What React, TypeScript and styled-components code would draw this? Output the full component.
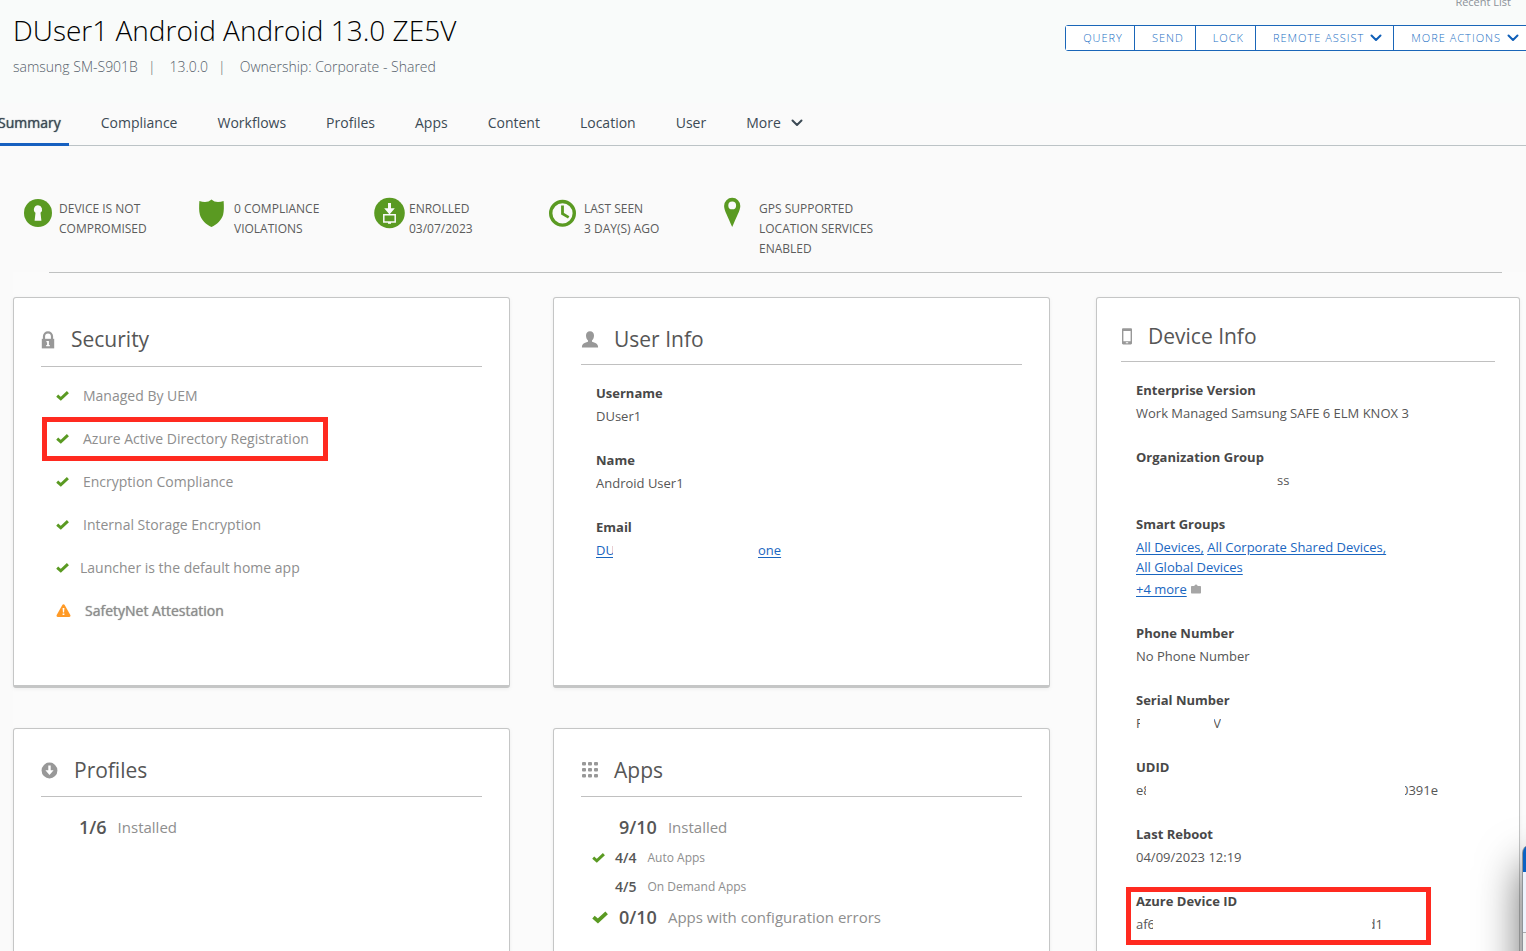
import React from "react";
import styled, { createGlobalStyle, css } from "styled-components";

const GlobalStyle = createGlobalStyle`
  *, *::before, *::after { box-sizing: border-box; }
  body {
    margin: 0;
    background: #fafafa;
    color: #565656;
    font-family: "Open Sans", "Noto Sans", sans-serif;
    font-size: 13px;
    line-height: 20px;
  }
  h1, h2, p, ul, dl, dd { margin: 0; padding: 0; }
  ul { list-style: none; }
`;

const Page = styled.div`
  position: relative;
  height: 100vh;
  overflow: hidden;
`;

/* Regular letterforms with a darker, slightly heavier stroke. */
const heavier = css`
  text-shadow: 0 0 1px currentColor;
`;

/* ---------- header ---------- */

const Header = styled.header`
  display: flex;
  justify-content: space-between;
  height: 103px;
  padding-left: 13px;
  background: #f9fbfa;
`;

const Heading = styled.div`
  padding-top: 11px;
`;

const Title = styled.h1`
  font-size: 28px;
  line-height: 38px;
  font-weight: 300;
  color: #000;
`;

const Subtitle = styled.ul`
  display: flex;
  margin-top: 8px;
  font-size: 14px;
  font-weight: 300;
  color: #565f6b;

  li + li::before {
    content: "|";
    margin: 0 14px 0 10px;
  }
`;

const HeaderActions = styled.div`
  display: flex;
  flex-direction: column;
  align-items: flex-end;
`;

const RecentLink = styled.a`
  height: 25px;
  margin-right: 15px;
  font-size: 11px;
  line-height: 4px;
  color: #8c9299;
  text-decoration: none;
`;

const ButtonGroup = styled.div`
  display: flex;
  height: 26px;
  margin-right: -5px;
  border: 1px solid #1a66b8;
  border-radius: 3px;
`;

const ActionButton = styled.button`
  display: flex;
  align-items: center;
  gap: 6px;
  padding: 0 11px 0 17px;
  border: 0;
  background: #fff;
  color: #2370c4;
  font: 300 11px/24px "Open Sans", sans-serif;
  letter-spacing: 1px;
  cursor: pointer;

  & + & { border-left: 1px solid #1a66b8; }
`;

/* ---------- tabs ---------- */

const Tabs = styled.nav`
  display: flex;
  gap: 24px;
  height: 43px;
  margin-left: -10px;
  border-bottom: 1px solid #bcc3c6;
`;

const Tab = styled.a<{ $active?: boolean }>`
  display: flex;
  align-items: center;
  gap: 10px;
  height: 43px;
  padding: 0 8px 3px;
  font-size: 14px;
  color: #3c4a55;
  text-decoration: none;
  ${(p) =>
    p.$active &&
    css`
      padding-bottom: 0;
      border-bottom: 3px solid #1660c0;
      ${heavier}
    `}
`;

/* ---------- status strip ---------- */

const StatusStrip = styled.ul`
  display: flex;
  height: 126px;
  padding: 53px 0 0 24px;
`;

const StatusItem = styled.li`
  display: grid;
  grid-template-columns: 35px 140px;
  font-size: 12px;
  line-height: 20px;
  color: #5c5c5c;

  svg { display: block; overflow: visible; }
`;

const Body = styled.main`
  margin-left: 13px;
  padding-right: 6px;
  background: #fbfbfb;
`;

const Divider = styled.hr`
  height: 1px;
  margin: 0 18px 24px 36px;
  border: 0;
  background: #bfc1c1;
`;

const Columns = styled.div`
  display: flex;
  align-items: flex-start;
  gap: 46px;
`;

const CardGrid = styled.div`
  flex: 1037;
  display: grid;
  grid-template-columns: 1fr 1fr;
  gap: 40px 43px;
`;

const Side = styled.aside`
  flex: 424;
`;

const Card = styled.section`
  min-height: 391px;
  padding: 22px 27px;
  border: 1px solid #c5c6c6;
  border-bottom-width: 3px;
  border-radius: 3px;
  background: #fff;
  box-shadow: 0 1px 4px rgba(0, 0, 0, 0.06);
`;

const SideCard = styled(Card)`
  min-height: 822px;
  padding: 19px 24px;
`;

const CardTitle = styled.h2<{ $gap: number; $below?: number }>`
  display: flex;
  align-items: center;
  gap: ${(p) => p.$gap}px;
  padding: 4px 0 ${(p) => p.$below ?? 11}px;
  border-bottom: 1px solid #c0c0c0;
  font-size: 21px;
  line-height: 30px;
  font-weight: 400;
  color: #565656;

  svg { flex: none; }
`;

const CheckList = styled.ul`
  padding: 7px 0 0 15px;
`;

const CheckRow = styled.li<{ $gap: number; $strong?: boolean }>`
  position: relative;
  display: flex;
  align-items: center;
  gap: ${(p) => p.$gap}px;
  height: 43px;
  font-size: 14px;
  color: #8e8e8e;
  ${(p) => p.$strong && heavier}
`;

const Highlight = styled.span<{ $inset: string; $width?: number }>`
  position: absolute;
  inset: ${(p) => p.$inset};
  width: ${(p) => (p.$width ? `${p.$width}px` : "auto")};
  border: 5px solid #ff2a20;
  pointer-events: none;
`;

const Fields = styled.dl`
  padding: 18px 0 0 15px;
`;

const Field = styled.div`
  position: relative;
  margin-bottom: 24px;

  dt {
    height: 23px;
    font-weight: 700;
    color: #484848;
  }
  dd { min-height: 20px; }
`;

const Link = styled.a`
  color: #1a66c0;
  text-decoration: underline;
  text-underline-offset: 2px;
`;

const MoreLine = styled.span`
  display: flex;
  align-items: center;
  gap: 4px;
  height: 22px;
  padding-top: 2px;
`;

/* A value whose middle is hidden: only its two ends can be seen. */
const Redacted = styled.dd`
  display: flex;
`;

const Fragment = styled.span<{ $width: number; $end?: boolean }>`
  display: flex;
  justify-content: ${(p) => (p.$end ? "flex-end" : "flex-start")};
  width: ${(p) => p.$width}px;
  overflow: hidden;
  white-space: nowrap;
`;

const Blank = styled.span<{ $width: number }>`
  width: ${(p) => p.$width}px;
`;

const Stats = styled.ul`
  padding-top: 14px;
`;

const Stat = styled.li<{ $small?: boolean; $indent: number }>`
  display: grid;
  grid-template-columns: ${(p) => p.$indent}px auto 1fr;
  align-items: center;
  height: ${(p) => (p.$small ? 29 : 32)}px;
  font-size: ${(p) => (p.$small ? 12 : 15)}px;
  color: #8e8e8e;

  strong {
    margin-right: 11px;
    font-size: ${(p) => (p.$small ? 14 : 18)}px;
    font-weight: 600;
    color: #565656;
  }
`;

const StatIcon = styled.span`
  display: flex;
  padding-left: 11px;
`;

/* ---------- neighbouring window ---------- */

const OtherWindow = styled.div`
  position: absolute;
  left: calc(100% - 4px);
  top: 845px;
  width: 400px;
  height: 300px;
  border-left: 1px solid #8f9499;
  border-radius: 8px 0 0 0;
  background: linear-gradient(#0b62c4 0 27px, #eef3fd 27px 87px, #a9abad 87px 88px, #f1f1f1 88px);
  box-shadow: 0 20px 44px rgba(0, 0, 0, 0.6);
`;

/* ---------- icons ---------- */

const GREEN = "#5a9a22";
const GREY = "#989898";

const Chevron = ({ color }: { color: string }) => (
  <svg width="12" height="8" viewBox="0 0 12 8" fill="none" aria-hidden="true">
    <path d="M1.500 1.500 6 6l4.500-4.500" stroke={color} strokeWidth="2" strokeLinecap="round" strokeLinejoin="round" />
  </svg>
);

const Check = ({ size = 13 }: { size?: number }) => (
  <svg width={size} height={size - 3} viewBox="0 0 13 10" fill="none" aria-hidden="true">
    <path d="M1.200 4.700 4.800 7.800 11.900 1.200" stroke={GREEN} strokeWidth="3" />
  </svg>
);

const KeyholeIcon = () => (
  <svg width="28" height="28" viewBox="0 0 28 28" aria-hidden="true">
    <circle cx="14" cy="14" r="14" fill={GREEN} />
    <path d="M14 6.300a4.200 4.200 0 0 0-2.500 7.500L10.600 21.700h6.800L16.500 13.800A4.200 4.200 0 0 0 14 6.300z" fill="#fafafa" />
  </svg>
);

const ShieldIcon = () => (
  <svg width="26" height="28" viewBox="0 0 26 28" aria-hidden="true">
    <path d="M12.500.6c1.800 1.700 4 2.500 6.500 2.500 2 0 3.900-.3 5.600-1 .4 5.300.5 10-.5 13.600C22.500 21 18 25.500 12.500 28 7 25.500 2.500 21 .9 15.700-.1 12.100 0 7.400.4 2.100 2.100 2.800 4 3.100 6 3.100c2.500 0 4.700-.8 6.500-2.500z" fill={GREEN} />
  </svg>
);

const EnrolledIcon = () => (
  <svg width="31" height="31" viewBox="0 0 31 31" aria-hidden="true">
    <circle cx="15.500" cy="14" r="15.300" fill={GREEN} />
    <path d="M9.800 15.700h11.400v7.200H9.800z" fill="none" stroke="#fafafa" strokeWidth="1.500" />
    <path d="M14 4h3v5.300h3.800L15.500 15.500l-5.300-6.200H14z" fill="#fafafa" />
    <path d="M14 23h3v1.800h-3z" fill="#fafafa" />
  </svg>
);

const ClockIcon = () => (
  <svg width="27" height="28" viewBox="0 0 27 28" fill="none" stroke={GREEN} aria-hidden="true">
    <circle cx="13.500" cy="14.300" r="11.800" strokeWidth="3.400" />
    <path d="M13.500 6.500v8.300l6.200 3.600" strokeWidth="2.800" />
  </svg>
);

const PinIcon = () => (
  <svg width="17" height="30" viewBox="0 0 17 30" aria-hidden="true">
    <path d="M8.200-1.200A8 8 0 0 0 .1 6.900C.1 11.300 4 17.800 8.200 28 12.400 17.800 16.300 11.300 16.300 6.900A8 8 0 0 0 8.200-1.200zm0 3.700a3.900 3.900 0 1 1 0 7.800 3.900 3.900 0 0 1 0-7.800z" fill={GREEN} />
  </svg>
);

const WarningIcon = () => (
  <svg width="15" height="13" viewBox="0 0 15 13" aria-hidden="true">
    <path d="M7.500.2c.5 0 .9.300 1.200.8l5.600 10c.5 1 0 1.900-1.100 1.900H1.800C.7 12.900.2 12 .7 11L6.300 1C6.600.5 7 .2 7.500.2z" fill="#ff9a26" />
    <path d="M6.600 4h1.800l-.3 4.500H6.900zM6.600 9.500h1.800v1.600H6.600z" fill="#fff" />
  </svg>
);

const LockIcon = () => (
  <svg width="14" height="20" viewBox="0 -2 14 20" aria-hidden="true">
    <path d="M3 9V5.300a4 4 0 0 1 8 0V9" fill="none" stroke={GREY} strokeWidth="2.200" />
    <path d="M.8 7.800h12.400v9.600H.8z" fill={GREY} />
    <path d="M5.400 10.100h2.500v4h.9v1.200H5.200v-1.200h.9v-2.800h-.7z" fill="#fff" />
  </svg>
);

const UserIcon = () => (
  <svg width="18" height="17" viewBox="0 0 18 17" aria-hidden="true">
    <path d="M9 .3c2.500 0 4 1.700 4 4.200 0 2-.8 4-2 5v1.300c2.600.9 5.600 1.700 6 4.500l.1 1.200H.9L1 15.300c.4-2.800 3.400-3.600 6-4.500V9.500c-1.200-1-2-3-2-5C5 2 6.500.3 9 .3z" fill={GREY} />
  </svg>
);

const PhoneIcon = () => (
  <svg width="12" height="17" viewBox="0 0 12 17" aria-hidden="true">
    <path fillRule="evenodd" d="M2.200.3h7.600c.7 0 1.200.5 1.200 1.200v13.800c0 .7-.5 1.200-1.200 1.200H2.200c-.7 0-1.200-.5-1.200-1.200V1.500C1 .8 1.500.3 2.200.3zM2.400 3v10.300h7.200V3zM4.800 14.300v1h2.400v-1z" fill={GREY} />
  </svg>
);

const ProfileIcon = () => (
  <svg width="17" height="17" viewBox="0 0 17 17" aria-hidden="true">
    <circle cx="8.500" cy="8.500" r="7.900" fill={GREY} />
    <path d="M7.300 3.500h2.400v4.700h2.900L8.500 13 4.400 8.200h2.900z" fill="#fff" />
  </svg>
);

const GridIcon = () => (
  <svg width="18" height="18" viewBox="0 0 18 18" fill={GREY} aria-hidden="true">
    {[1, 7, 13].flatMap((y) =>
      [1, 7, 13].map((x) => <rect key={`${x}-${y}`} x={x} y={y} width="4" height="3.500" rx="1" />)
    )}
  </svg>
);

const BagIcon = () => (
  <svg width="10" height="10" viewBox="0 0 10 10" aria-hidden="true">
    <path d="M3 2 5 .3 7 2h2c.6 0 1 .4 1 1v5.500c0 .6-.4 1-1 1H1c-.6 0-1-.4-1-1V3c0-.6.4-1 1-1z" fill="#a6a6a6" />
  </svg>
);

/* ---------- page ---------- */

const tabs = ["Compliance", "Workflows", "Profiles", "Apps", "Content", "Location", "User"];

const statuses = [
  { icon: <KeyholeIcon />, lines: ["DEVICE IS NOT", "COMPROMISED"] },
  { icon: <ShieldIcon />, lines: ["0 COMPLIANCE", "VIOLATIONS"] },
  { icon: <EnrolledIcon />, lines: ["ENROLLED", "03/07/2023"] },
  { icon: <ClockIcon />, lines: ["LAST SEEN", "3 DAY(S) AGO"] },
  { icon: <PinIcon />, lines: ["GPS SUPPORTED", "LOCATION SERVICES", "ENABLED"] },
];

export default function App() {
  return (
    <Page>
      <GlobalStyle />
      <Header>
        <Heading>
          <Title>DUser1 Android Android 13.0 ZE5V</Title>
          <Subtitle>
            <li>samsung SM-S901B</li>
            <li>13.0.0</li>
            <li>Ownership: Corporate - Shared</li>
          </Subtitle>
        </Heading>
        <HeaderActions>
          <RecentLink href="#recent">Recent List</RecentLink>
          <ButtonGroup>
            <ActionButton>QUERY</ActionButton>
            <ActionButton>SEND</ActionButton>
            <ActionButton>LOCK</ActionButton>
            <ActionButton>REMOTE ASSIST <Chevron color="#0f5fb8" /></ActionButton>
            <ActionButton>MORE ACTIONS <Chevron color="#0f5fb8" /></ActionButton>
          </ButtonGroup>
        </HeaderActions>
      </Header>

      <Tabs>
        <Tab href="#summary" $active>Summary</Tab>
        {tabs.map((t) => (
          <Tab key={t} href={`#${t.toLowerCase()}`}>{t}</Tab>
        ))}
        <Tab href="#more">More <Chevron color="#3c4a55" /></Tab>
      </Tabs>

      <StatusStrip>
        {statuses.map((s) => (
          <StatusItem key={s.lines[0]}>
            {s.icon}
            <div>{s.lines.map((l) => <p key={l}>{l}</p>)}</div>
          </StatusItem>
        ))}
      </StatusStrip>

      <Body>
        <Divider />
        <Columns>
          <CardGrid>
            <Card>
              <CardTitle $gap={16} $below={12}><LockIcon />Security</CardTitle>
              <CheckList>
                <CheckRow $gap={14}><Check />Managed By UEM</CheckRow>
                <CheckRow $gap={14}>
                  <Check />Azure Active Directory Registration
                  <Highlight $inset="0 auto -1px -14px" $width={286} />
                </CheckRow>
                <CheckRow $gap={14}><Check />Encryption Compliance</CheckRow>
                <CheckRow $gap={14}><Check />Internal Storage Encryption</CheckRow>
                <CheckRow $gap={11}><Check />Launcher is the default home app</CheckRow>
                <CheckRow $gap={14} $strong><WarningIcon />SafetyNet Attestation</CheckRow>
              </CheckList>
            </Card>

            <Card>
              <CardTitle $gap={15} $below={10}><UserIcon />User Info</CardTitle>
              <Fields>
                <Field><dt>Username</dt><dd>DUser1</dd></Field>
                <Field><dt>Name</dt><dd>Android User1</dd></Field>
                <Field>
                  <dt>Email</dt>
                  <Redacted>
                    <Fragment $width={17}><Link href="#email">DU</Link></Fragment>
                    <Blank $width={145} />
                    <Link href="#email">one</Link>
                  </Redacted>
                </Field>
              </Fields>
            </Card>

            <Card>
              <CardTitle $gap={16}><ProfileIcon />Profiles</CardTitle>
              <Stats>
                <Stat $indent={38}><span /><strong>1/6</strong><span>Installed</span></Stat>
              </Stats>
            </Card>

            <Card>
              <CardTitle $gap={15}><GridIcon />Apps</CardTitle>
              <Stats>
                <Stat $indent={38}><span /><strong>9/10</strong><span>Installed</span></Stat>
                <Stat $indent={34} $small><StatIcon><Check /></StatIcon><strong>4/4</strong><span>Auto Apps</span></Stat>
                <Stat $indent={34} $small><span /><strong>4/5</strong><span>On Demand Apps</span></Stat>
                <Stat $indent={38}><StatIcon><Check size={16} /></StatIcon><strong>0/10</strong><span>Apps with configuration errors</span></Stat>
              </Stats>
            </Card>
          </CardGrid>

          <Side>
            <SideCard>
              <CardTitle $gap={15} $below={10}><PhoneIcon />Device Info</CardTitle>
              <Fields>
                <Field><dt>Enterprise Version</dt><dd>Work Managed Samsung SAFE 6 ELM KNOX 3</dd></Field>
                <Field>
                  <dt>Organization Group</dt>
                  <Redacted><Blank $width={141} />ss</Redacted>
                </Field>
                <Field>
                  <dt>Smart Groups</dt>
                  <dd>
                    <Link href="#g1">All Devices,</Link> <Link href="#g2">All Corporate Shared Devices,</Link>
                    <br />
                    <Link href="#g3">All Global Devices</Link>
                    <MoreLine><Link href="#more-groups">+4 more</Link><BagIcon /></MoreLine>
                  </dd>
                </Field>
                <Field><dt>Phone Number</dt><dd>No Phone Number</dd></Field>
                <Field>
                  <dt>Serial Number</dt>
                  <Redacted>
                    <Fragment $width={4}>R</Fragment>
                    <Blank $width={74} />
                    <Fragment $width={7} $end>V</Fragment>
                  </Redacted>
                </Field>
                <Field>
                  <dt>UDID</dt>
                  <Redacted>
                    <Fragment $width={10}>e8</Fragment>
                    <Blank $width={259} />
                    <Fragment $width={33} $end>0391e</Fragment>
                  </Redacted>
                </Field>
                <Field><dt>Last Reboot</dt><dd>04/09/2023 12:19</dd></Field>
                <Field>
                  <dt>Azure Device ID</dt>
                  <Redacted>
                    <Fragment $width={17}>af6</Fragment>
                    <Blank $width={219} />
                    <Fragment $width={11} $end>d1</Fragment>
                  </Redacted>
                  <Highlight $inset="-4px auto -11px -10px" $width={305} />
                </Field>
              </Fields>
            </SideCard>
          </Side>
        </Columns>
      </Body>

      <OtherWindow />
    </Page>
  );
}
